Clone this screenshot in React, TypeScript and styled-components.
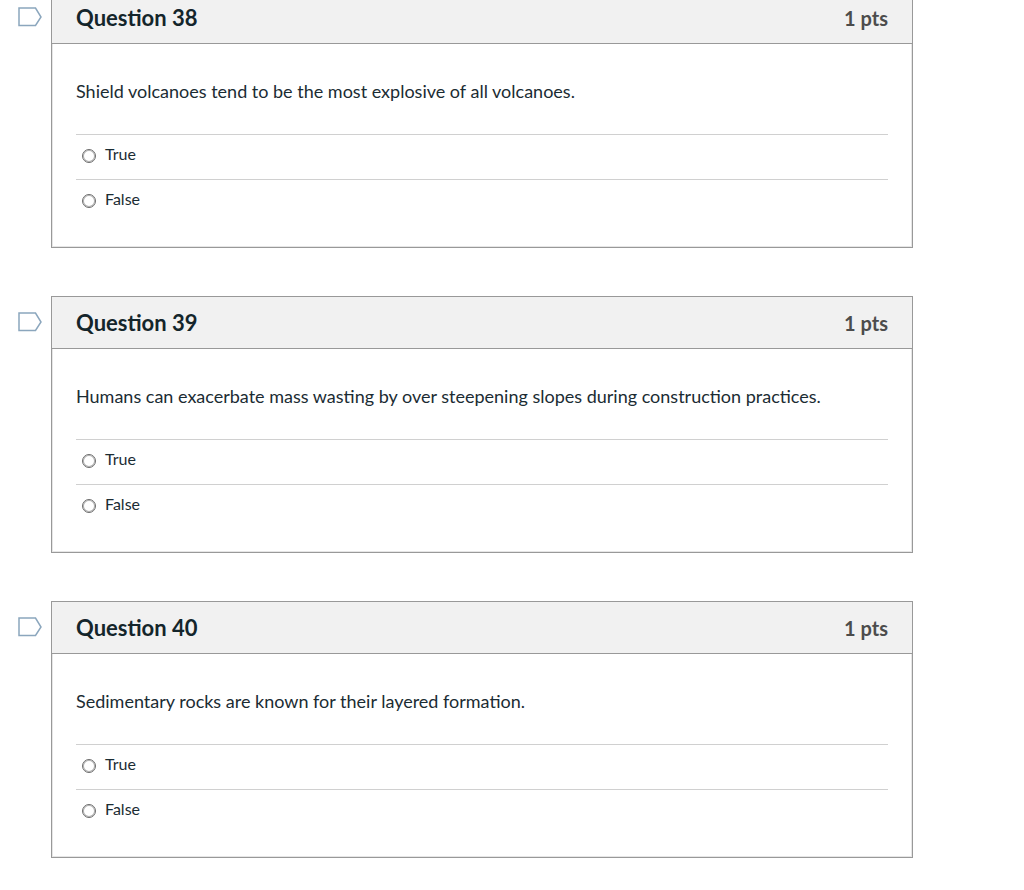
import React, { useState } from "react";
import styled, { createGlobalStyle } from "styled-components";

const GlobalStyle = createGlobalStyle`
  *, *::before, *::after { box-sizing: border-box; }
  body {
    margin: 0;
    background: #fff;
    color: #1b2c33;
    font-family: Lato, "Liberation Sans", sans-serif;
  }
`;

const Page = styled.main`
  display: flex;
  flex-direction: column;
  gap: 48px;
  margin-top: -9px;
  padding: 0 111px 32px 18px;
`;

const QuestionRow = styled.section`
  display: flex;
  align-items: flex-start;
  gap: 9px;
`;

const FlagButton = styled.button`
  flex: none;
  width: 24px;
  height: 20px;
  margin-top: 16px;
  padding: 0;
  border: 0;
  background: none;
  cursor: pointer;

  svg { display: block; }
`;

const Card = styled.div`
  flex: 1;
  min-width: 0;
  border: 1px solid #999;
  box-shadow: inset 0 0 0 1px #e6e6e6;
`;

const CardHeader = styled.header`
  display: flex;
  align-items: center;
  justify-content: space-between;
  min-height: 52px;
  padding: 1px 24px 0;
  background: #f1f1f1;
  border-bottom: 1px solid #999;
`;

const Title = styled.h2`
  margin: 0;
  font-size: 22px;
  line-height: 28px;
  font-weight: 700;
  color: #14252b;
`;

const Points = styled.span`
  font-size: 20px;
  line-height: 28px;
  font-weight: 700;
  color: #4c4c4c;
`;

const CardBody = styled.div`
  padding: 33px 24px 23px;
`;

const Prompt = styled.p`
  margin: 0 0 29px;
  font-size: 18px;
  line-height: 28px;
`;

const Answers = styled.fieldset`
  min-width: 0;
  margin: 0;
  padding: 0;
  border: 0;
`;

const Answer = styled.label`
  display: flex;
  align-items: center;
  gap: 9px;
  height: 45px;
  padding: 0 6px 6px;
  border-top: 1px solid #d0d0d0;
  font-size: 16px;
  line-height: 24px;
  cursor: pointer;
`;

const Radio = styled.input`
  appearance: none;
  flex: none;
  width: 14px;
  height: 14px;
  margin: 4px 0 0;
  border: 1px solid #6c6c6c;
  border-radius: 50%;
  background: #fff;
  box-shadow: inset 0 0 0 1px #b4b4b4;

  &:checked { background: radial-gradient(#1b2c33 40%, #fff 45%); }
`;

const questions = [
  { number: 38, text: "Shield volcanoes tend to be the most explosive of all volcanoes." },
  { number: 39, text: "Humans can exacerbate mass wasting by over steepening slopes during construction practices." },
  { number: 40, text: "Sedimentary rocks are known for their layered formation." },
];

function Question({ number, text }: { number: number; text: string }) {
  const [flagged, setFlagged] = useState(false);
  return (
    <QuestionRow>
      <FlagButton
        type="button"
        aria-label={`Flag question ${number}`}
        aria-pressed={flagged}
        onClick={() => setFlagged(!flagged)}
      >
        <svg width="24" height="20" viewBox="0 0 24 20" aria-hidden="true">
          <path
            d="M1 1H17.5L23 10L17.5 18.5H1Z"
            fill={flagged ? "#f5c542" : "#fff"}
            stroke="#8ba6bd"
            strokeWidth="1.5"
          />
        </svg>
      </FlagButton>
      <Card>
        <CardHeader>
          <Title>Question {number}</Title>
          <Points>1 pts</Points>
        </CardHeader>
        <CardBody>
          <Prompt id={`prompt-${number}`}>{text}</Prompt>
          <Answers aria-labelledby={`prompt-${number}`}>
            {["True", "False"].map((choice) => (
              <Answer key={choice} htmlFor={`q${number}-${choice}`}>
                <Radio type="radio" id={`q${number}-${choice}`} name={`q${number}`} value={choice} />
                {choice}
              </Answer>
            ))}
          </Answers>
        </CardBody>
      </Card>
    </QuestionRow>
  );
}

export default function App() {
  return (
    <>
      <GlobalStyle />
      <Page>
        {questions.map((question) => (
          <Question key={question.number} {...question} />
        ))}
      </Page>
    </>
  );
}
